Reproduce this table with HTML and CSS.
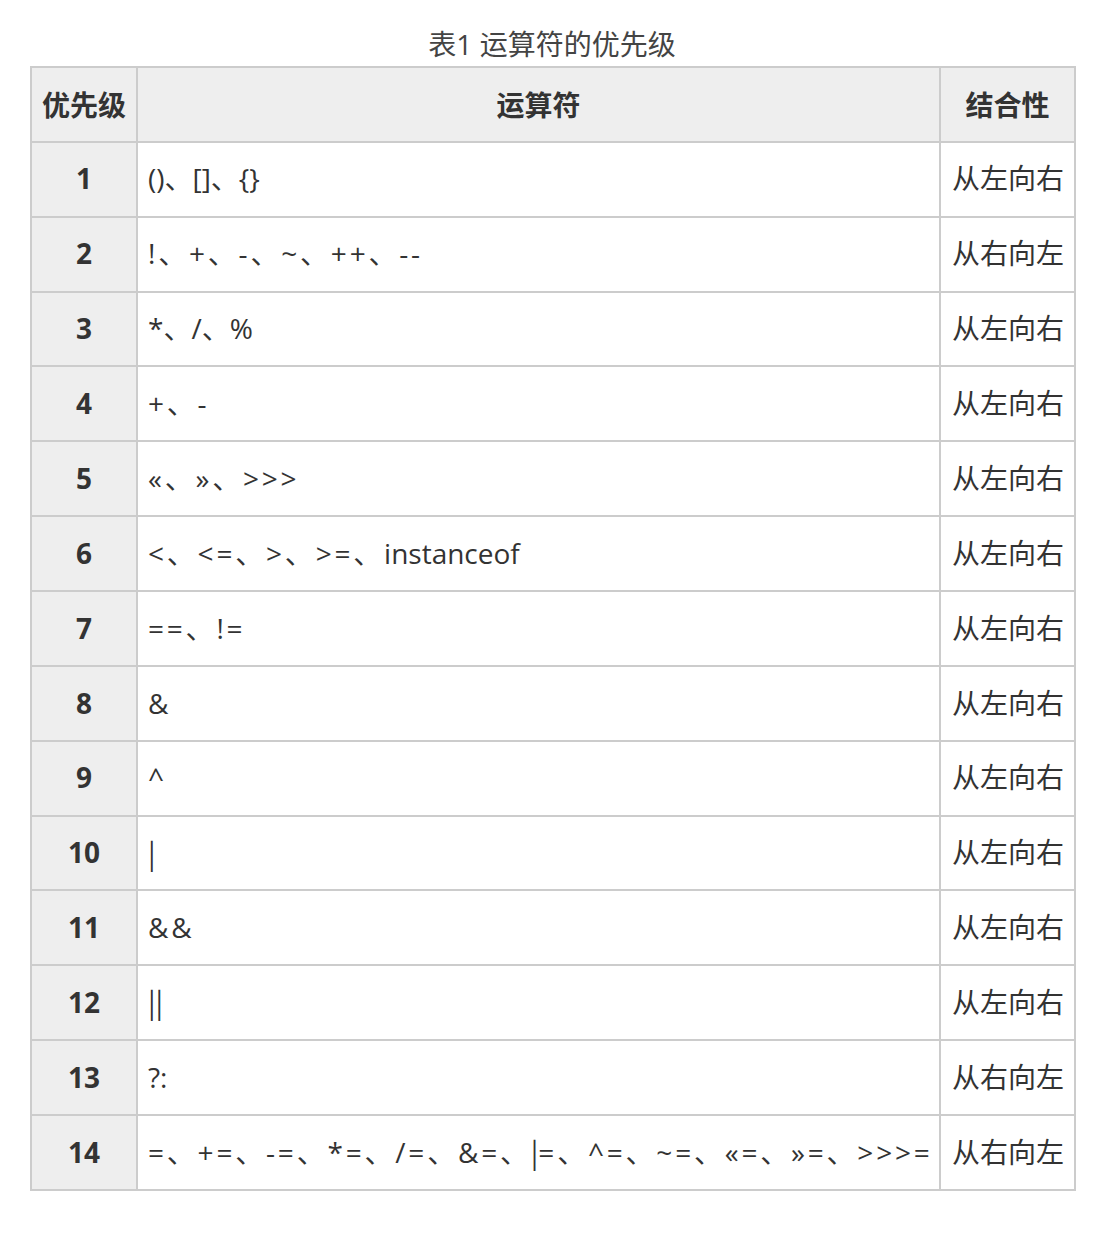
FILE: index.html
```html
<!DOCTYPE html>
<html lang="zh-CN">
<head>
<meta charset="utf-8">
<title>运算符的优先级</title>
<link rel="stylesheet" href="styles.css">
</head>
<body>
<div class="page">
  <div class="caption">表1 运算符的优先级</div>
  <table class="ops">
    <colgroup>
      <col class="c1">
      <col class="c2">
      <col class="c3">
    </colgroup>
    <thead>
      <tr><th>优先级</th><th>运算符</th><th>结合性</th></tr>
    </thead>
    <tbody>
      <tr><td class="lvl">1</td><td class="op">()、[]、{}</td><td class="dir">从左向右</td></tr>
      <tr><td class="lvl">2</td><td class="op sp">!、+、-、~、++、--</td><td class="dir">从右向左</td></tr>
      <tr><td class="lvl">3</td><td class="op">*、/、%</td><td class="dir">从左向右</td></tr>
      <tr><td class="lvl">4</td><td class="op sp">+、-</td><td class="dir">从左向右</td></tr>
      <tr><td class="lvl">5</td><td class="op sp">«、»、&gt;&gt;&gt;</td><td class="dir">从左向右</td></tr>
      <tr><td class="lvl">6</td><td class="op sp">&lt;、&lt;=、&gt;、&gt;=、<span class="word">instanceof</span></td><td class="dir">从左向右</td></tr>
      <tr><td class="lvl">7</td><td class="op sp">==、!=</td><td class="dir">从左向右</td></tr>
      <tr><td class="lvl">8</td><td class="op">&amp;</td><td class="dir">从左向右</td></tr>
      <tr><td class="lvl">9</td><td class="op">^</td><td class="dir">从左向右</td></tr>
      <tr><td class="lvl">10</td><td class="op"><span class="bar">|</span></td><td class="dir">从左向右</td></tr>
      <tr><td class="lvl">11</td><td class="op sp">&amp;&amp;</td><td class="dir">从左向右</td></tr>
      <tr><td class="lvl">12</td><td class="op"><span class="bar">||</span></td><td class="dir">从左向右</td></tr>
      <tr><td class="lvl">13</td><td class="op">?:</td><td class="dir">从右向左</td></tr>
      <tr><td class="lvl">14</td><td class="op sp">=、+=、-=、*=、/=、&amp;=、<span class="bar">|</span>=、^=、~=、«=、»=、&gt;&gt;&gt;=</td><td class="dir">从右向左</td></tr>
    </tbody>
  </table>
</div>
</body>
</html>
```

FILE: styles.css
```css
html, body {
  margin: 0;
  padding: 0;
  background: #fff;
}

body {
  font-family: "Open Sans", "Noto Sans CJK SC", sans-serif;
  color: #333;
}

.page {
  width: 1044px;
  margin-left: 30px;
  padding-top: 23px;
}

.caption {
  text-align: center;
  font-size: 28px;
  line-height: 43px;
  color: #444;
}

.ops {
  width: 1044px;
  table-layout: fixed;
  border-collapse: collapse;
  font-size: 28px;
}

.ops col.c1 { width: 106px; }
.ops col.c2 { width: 803px; }
.ops col.c3 { width: 135px; }

.ops th,
.ops td {
  border: 2px solid #ccc;
  height: 74.86px;
  padding: 0 10px;
  box-sizing: border-box;
  vertical-align: middle;
  white-space: nowrap;
  line-height: 1.2;
}

.ops th {
  background: #eee;
  font-weight: bold;
  text-align: center;
  color: #333;
  padding-top: 3px;
}

.ops td.lvl {
  background: #eee;
  font-weight: bold;
  text-align: center;
}

.ops td.op {
  text-align: left;
}

.ops td.op.sp {
  letter-spacing: 0.1em;
}

.ops td.op .word {
  letter-spacing: 0;
}

.ops td.op .bar {
  font-family: "Noto Sans CJK SC", sans-serif;
  letter-spacing: 0;
}

.ops td.dir {
  text-align: left;
  padding-left: 11px;
}
```
